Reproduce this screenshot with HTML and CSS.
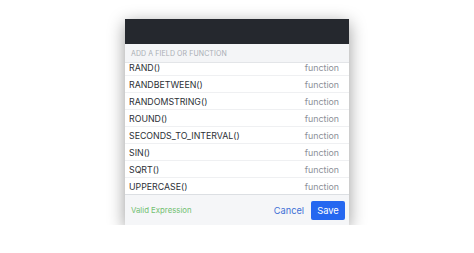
FILE: index.html
```html
<!DOCTYPE html>
<html>
<head>
<meta charset="utf-8">
<link rel="stylesheet" href="styles.css">
</head>
<body>
<div class="panel">
  <div class="header"></div>
  <div class="search">ADD A FIELD OR FUNCTION</div>
  <div class="list">
    <div class="rows">
      <div class="row"><span class="name">RAND()</span><span class="type">function</span></div>
      <div class="row"><span class="name">RANDBETWEEN()</span><span class="type">function</span></div>
      <div class="row"><span class="name">RANDOMSTRING()</span><span class="type">function</span></div>
      <div class="row"><span class="name">ROUND()</span><span class="type">function</span></div>
      <div class="row"><span class="name">SECONDS_TO_INTERVAL()</span><span class="type">function</span></div>
      <div class="row"><span class="name">SIN()</span><span class="type">function</span></div>
      <div class="row"><span class="name">SQRT()</span><span class="type">function</span></div>
      <div class="row last"><span class="name">UPPERCASE()</span><span class="type">function</span></div>
    </div>
  </div>
  <div class="footer">
    <span class="valid">Valid Expression</span>
    <div class="actions">
      <span class="cancel">Cancel</span>
      <span class="save">Save</span>
    </div>
  </div>
</div>
</body>
</html>
```
FILE: styles.css
```css
html, body {
  margin: 0;
  padding: 0;
  background: #ffffff;
}
body {
  font-family: "Inter", "Liberation Sans", sans-serif;
  font-size: 8.8px;
  padding-top: 19px;
}
.panel {
  width: 224px;
  margin: 0 auto;
  background: #ffffff;
  box-shadow: 0 4px 16px rgba(0, 0, 0, 0.4);
}
.header {
  height: 25px;
  background: #25282e;
}
.search {
  height: 19px;
  box-sizing: border-box;
  padding-left: 6px;
  display: flex;
  align-items: center;
  background: #f4f5f7;
  color: #a9adb4;
  font-size: 7px;
  letter-spacing: 0.1px;
  border-bottom: 1px solid #e3e5e8;
}
.list {
  height: 131px;
  overflow: hidden;
  border-bottom: 1px solid #dcdfe3;
}
.rows {
  margin-top: -4px;
}
.row {
  height: 17px;
  box-sizing: border-box;
  display: flex;
  align-items: center;
  justify-content: space-between;
  padding: 0 10px 0 4px;
  border-bottom: 1px solid #eff0f2;
}
.row.last {
  border-bottom: none;
}
.name {
  color: #2b2f36;
}
.type {
  color: #8c9098;
}
.footer {
  height: 30px;
  background: #f5f6f8;
  display: flex;
  align-items: center;
  justify-content: space-between;
  padding: 0 4px 0 6px;
}
.valid {
  color: #73c072;
  font-size: 7.8px;
}
.actions {
  display: flex;
  align-items: center;
  gap: 7px;
}
.cancel {
  color: #3d6fd6;
  font-size: 9.2px;
}
.save {
  background: #2567f0;
  color: #ffffff;
  font-size: 9.4px;
  width: 34px;
  height: 19px;
  border-radius: 2px;
  display: flex;
  align-items: center;
  justify-content: center;
}
```
